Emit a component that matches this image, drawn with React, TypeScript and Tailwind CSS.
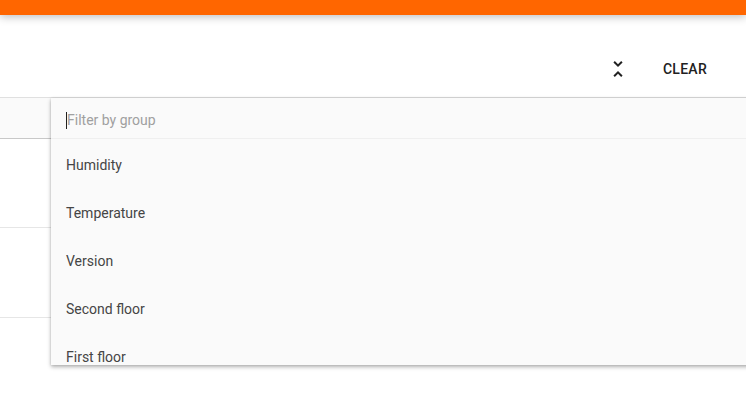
import React from 'react'

const groups = ['Humidity', 'Temperature', 'Version', 'Second floor', 'First floor']

function UnfoldLess() {
  return (
    <svg viewBox="0 0 24 24" className="h-6 w-6" fill="#212121">
      <path d="M7.41 18.59L8.83 20 12 16.83 15.17 20l1.41-1.41L12 14l-4.59 4.59zm9.18-13.18L15.17 4 12 7.17 8.83 4 7.41 5.41 12 10l4.59-4.59z" />
    </svg>
  )
}

export default function App() {
  return (
    <div className="relative h-[402px] w-[746px] overflow-hidden bg-white font-['Roboto',sans-serif]">
      <div className="relative z-10 h-[15px] bg-[#ff6600] shadow-[0_2px_8px_rgba(0,0,0,0.25)]" />

      <div className="flex h-[82px] items-center justify-end pr-[31px] pt-[26px]">
        <button className="flex h-9 w-9 items-center justify-center">
          <UnfoldLess />
        </button>
        <button className="ml-[19px] px-2 py-2 text-[14px] font-medium uppercase tracking-[0.02em] text-[#212121]">
          Clear
        </button>
      </div>

      <div className="border-t border-[#e0e0e0]">
        <div className="h-[41px] border-b border-[#c8c8c8] bg-[#fafafa]" />
        <div className="h-[89px] border-b border-[#e6e6e6]" />
        <div className="h-[90px] border-b border-[#e6e6e6]" />
        <div className="h-[60px]" />
      </div>

      <div className="absolute left-[51px] top-[98px] h-[267px] w-[700px] overflow-hidden bg-[#fafafa] shadow-[0_2px_4px_rgba(0,0,0,0.3),0_0_2px_rgba(0,0,0,0.12)]">
        <div className="flex h-[41px] items-center border-b border-[#efefef] pl-[15px] pt-1">
          <span className="h-[17px] w-px bg-[#212121]" />
          <span className="text-[14px] text-[#a0a0a0]">Filter by group</span>
        </div>
        {groups.map((g) => (
          <div key={g} className="flex h-12 items-center pl-[15px] pt-1 text-[14px] text-[#454545]">
            {g}
          </div>
        ))}
      </div>
    </div>
  )
}
